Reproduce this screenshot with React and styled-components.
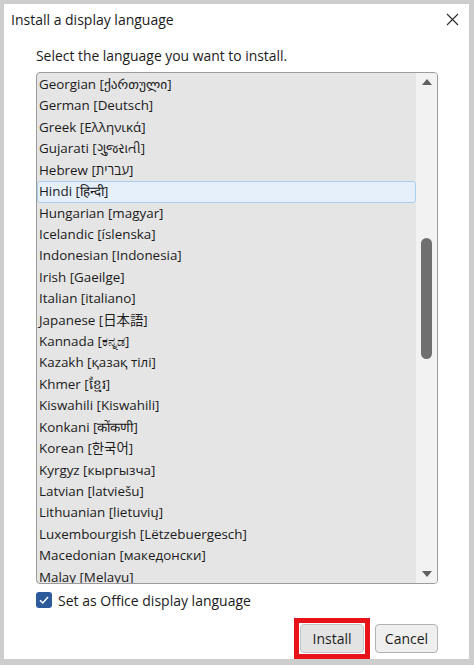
import React, { useState } from 'react';
import styled, { createGlobalStyle } from 'styled-components';

const GlobalStyle = createGlobalStyle`
    html, body {
        margin: 0;
        padding: 0;
    }
    body {
        width: 474px;
        height: 665px;
        overflow: hidden;
        font-family: "Open Sans", "DejaVu Sans", "Noto Sans CJK JP", "Noto Sans CJK KR", sans-serif;
        color: #1b1b1b;
    }
`

const Page = styled.div`
    box-sizing: border-box;
    width: 474px;
    height: 665px;
    background: #cdcdcd;
    padding: 4px 5px 6px 4px;
    display: flex;
`

const Dialog = styled.div`
    flex: 1;
    background: #ffffff;
    display: flex;
    flex-direction: column;
`

const TitleBar = styled.div`
    box-sizing: border-box;
    display: flex;
    justify-content: space-between;
    align-items: center;
    height: 32px;
    padding: 2px 9px 0 7px;
`

const Title = styled.div`
    font-size: 14px;
`

const CloseButton = styled.button`
    border: none;
    background: transparent;
    padding: 0;
    width: 16px;
    height: 16px;
    display: flex;
    align-items: center;
    justify-content: center;
`

const Content = styled.div`
    padding: 4px 31px 0 32px;
    display: flex;
    flex-direction: column;
`

const Prompt = styled.div`
    font-size: 13.9px;
    height: 35px;
    line-height: 38px;
    white-space: nowrap;
`

const ListBox = styled.div`
    height: 512px;
    box-sizing: border-box;
    border: 1px solid #9c9c9c;
    border-radius: 4px;
    background: #e5e5e5;
    display: flex;
    overflow: hidden;
`

const Items = styled.div`
    flex: 1;
    padding-top: 1px;
    overflow: hidden;
`

const Item = styled.div`
    box-sizing: border-box;
    height: 21.43px;
    line-height: 19.4px;
    padding-left: 1px;
    font-size: 13.4px;
    white-space: nowrap;
    border: 1px solid ${p => (p.$selected ? '#a9cdee' : 'transparent')};
    border-radius: 3px;
    background: ${p => (p.$selected ? '#e6f0fa' : 'transparent')};
`

const ScrollTrack = styled.div`
    width: 21px;
    background: #f2f2f2;
    display: flex;
    flex-direction: column;
    align-items: center;
    padding: 6px 0;
    box-sizing: border-box;
`

const Arrow = styled.div`
    width: 0;
    height: 0;
    border-left: 5px solid transparent;
    border-right: 5px solid transparent;
    ${p => (p.$down ? 'border-top: 6px solid #606060;' : 'border-bottom: 6px solid #606060;')}
`

const ThumbArea = styled.div`
    flex: 1;
    width: 100%;
    display: flex;
    justify-content: center;
    padding-top: 153px;
`

const Thumb = styled.div`
    width: 11px;
    height: 121px;
    border-radius: 6px;
    background: #6f6f6f;
`

const CheckRow = styled.label`
    display: flex;
    align-items: center;
    gap: 6px;
    height: 32px;
    font-size: 14px;
    white-space: nowrap;
`

const CheckBox = styled.span`
    width: 16px;
    height: 16px;
    border-radius: 3px;
    background: #2c5a9a;
    display: flex;
    align-items: center;
    justify-content: center;
`

const ButtonRow = styled.div`
    display: flex;
    justify-content: flex-end;
    align-items: center;
    gap: 5px;
    padding-top: 2px;
`

const HighlightFrame = styled.div`
    border: 5px solid #e8121b;
    padding: 1px;
    display: flex;
`

const Button = styled.button`
    box-sizing: border-box;
    height: 29px;
    width: ${p => p.$width}px;
    border: 1px solid ${p => (p.$primary ? '#c4c4c4' : '#b3b3b3')};
    border-radius: 4px;
    background: ${p => (p.$primary ? '#e3e3e3' : '#efefef')};
    font-family: inherit;
    font-size: 14px;
    color: #1b1b1b;
    padding: 0;
`

const languages = [
    'Georgian [ქართული]',
    'German [Deutsch]',
    'Greek [Ελληνικά]',
    'Gujarati [ગુજરાતી]',
    'Hebrew [עברית]',
    'Hindi [हिन्दी]',
    'Hungarian [magyar]',
    'Icelandic [íslenska]',
    'Indonesian [Indonesia]',
    'Irish [Gaeilge]',
    'Italian [italiano]',
    'Japanese [日本語]',
    'Kannada [ಕನ್ನಡ]',
    'Kazakh [қазақ тілі]',
    'Khmer [ខ្មែរ]',
    'Kiswahili [Kiswahili]',
    'Konkani [कोंकणी]',
    'Korean [한국어]',
    'Kyrgyz [кыргызча]',
    'Latvian [latviešu]',
    'Lithuanian [lietuvių]',
    'Luxembourgish [Lëtzebuergesch]',
    'Macedonian [македонски]',
    'Malay [Melayu]'
]

export default function App() {
    const [selected, setSelected] = useState('Hindi [हिन्दी]');

    return (
        <>
        <GlobalStyle />
        <Page>
            <Dialog>
                <TitleBar>
                    <Title>Install a display language</Title>
                    <CloseButton aria-label="Close">
                        <svg width="13" height="13" viewBox="0 0 13 13">
                            <path d="M1 1 L12 12 M12 1 L1 12" stroke="#2a2a2a" strokeWidth="1.1" fill="none" />
                        </svg>
                    </CloseButton>
                </TitleBar>
                <Content>
                    <Prompt>Select the language you want to install.</Prompt>
                    <ListBox>
                        <Items>
                            {languages.map(lang => (
                                <Item
                                    key={lang}
                                    $selected={lang === selected}
                                    onClick={() => setSelected(lang)}
                                >
                                    {lang}
                                </Item>
                            ))}
                        </Items>
                        <ScrollTrack>
                            <Arrow />
                            <ThumbArea>
                                <Thumb />
                            </ThumbArea>
                            <Arrow $down />
                        </ScrollTrack>
                    </ListBox>
                    <CheckRow>
                        <CheckBox>
                            <svg width="12" height="12" viewBox="0 0 12 12">
                                <path d="M2 6.3 L4.8 9 L10 3" stroke="#ffffff" strokeWidth="1.5" fill="none" />
                            </svg>
                        </CheckBox>
                        Set as Office display language
                    </CheckRow>
                    <ButtonRow>
                        <HighlightFrame>
                            <Button $primary $width={64}>Install</Button>
                        </HighlightFrame>
                        <Button $width={63}>Cancel</Button>
                    </ButtonRow>
                </Content>
            </Dialog>
        </Page>
        </>
    )
}
